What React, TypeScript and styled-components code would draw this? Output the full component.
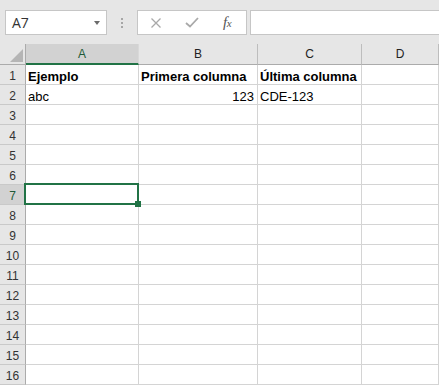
import React from 'react';
import styled, { createGlobalStyle } from 'styled-components';

const GREEN = '#217346';

const Global = createGlobalStyle`
  html, body { margin: 0; padding: 0; background: #fff; overflow: hidden; }
  #root { width: 439px; height: 385px; }
`;

const Page = styled.div`
  width: 439px;
  height: 385px;
  display: flex;
  flex-direction: column;
  overflow: hidden;
  font-family: "Liberation Sans", Arial, sans-serif;
`;

const Toolbar = styled.div`
  flex: none;
  height: 44px;
  box-sizing: border-box;
  background: #e6e6e6;
  display: flex;
  align-items: flex-start;
  padding: 10px 0 0 5px;
`;

const NameBox = styled.div`
  width: 102px;
  height: 25px;
  box-sizing: border-box;
  background: #fff;
  border: 1px solid #c6c6c6;
  display: flex;
  align-items: center;
  justify-content: space-between;
  padding: 0 6px 0 6px;
  font-family: "Open Sans", "Liberation Sans", sans-serif;
  font-size: 14px;
  color: #333;
`;

const DropArrow = styled.span`
  width: 0;
  height: 0;
  border-left: 3.5px solid transparent;
  border-right: 3.5px solid transparent;
  border-top: 4px solid #6b6b6b;
  margin-top: 1px;
`;

const Splitter = styled.div`
  width: 30px;
  height: 25px;
  display: flex;
  flex-direction: column;
  align-items: center;
  justify-content: center;
  gap: 2px;
`;

const Dot = styled.span`
  width: 2px;
  height: 2px;
  background: #a6a6a6;
`;

const FxButtons = styled.div`
  width: 110px;
  height: 25px;
  box-sizing: border-box;
  background: #fff;
  border: 1px solid #c6c6c6;
  display: grid;
  grid-template-columns: 36px 35px 36px;
`;

const IconSlot = styled.div`
  display: flex;
  align-items: center;
  justify-content: center;
`;

const FxText = styled.span`
  font-family: "Liberation Serif", "Times New Roman", serif;
  font-style: italic;
  font-size: 15px;
  color: #555;
  letter-spacing: -0.5px;
  & small { font-size: 11px; }
`;

const FormulaInput = styled.div`
  flex: 1;
  height: 25px;
  box-sizing: border-box;
  margin-left: 3px;
  margin-right: -4px;
  background: #fff;
  border: 1px solid #c6c6c6;
`;

const Sheet = styled.div`
  flex: 1;
  display: grid;
  grid-template-columns: 26px 113px 119px 104px 1fr;
  grid-template-rows: 21px;
  grid-auto-rows: 20px;
`;

const Corner = styled.div`
  box-sizing: border-box;
  background: #e6e6e6;
  border-right: 1px solid #ababab;
  border-bottom: 1px solid #ababab;
  display: flex;
  align-items: flex-end;
  justify-content: flex-end;
  padding: 0 2px 2px 0;
`;

const ColHeader = styled.div<{ $active?: boolean }>`
  box-sizing: border-box;
  background: ${p => (p.$active ? '#d2d2d2' : '#e6e6e6')};
  border-right: 1px solid ${p => (p.$active ? '#d9d9d9' : '#bdbdbd')};
  border-bottom: ${p => (p.$active ? `2px solid ${GREEN}` : '1px solid #ababab')};
  display: flex;
  align-items: center;
  justify-content: center;
  padding-top: ${p => (p.$active ? '1px' : '0')};
  font-size: 12px;
  line-height: 14px;
  color: ${p => (p.$active ? '#1f5a38' : '#222')};
`;

const RowHeader = styled.div<{ $active?: boolean }>`
  box-sizing: border-box;
  background: ${p => (p.$active ? '#d2d2d2' : '#e6e6e6')};
  border-right: 1px solid #ababab;
  border-bottom: 1px solid #c9c9c9;
  display: flex;
  align-items: flex-end;
  justify-content: center;
  font-size: 12px;
  line-height: 15px;
  color: ${p => (p.$active ? '#1f5a38' : '#333')};
`;

const Cell = styled.div<{ $bold?: boolean; $right?: boolean }>`
  position: relative;
  box-sizing: border-box;
  border-right: 1px solid #d4d4d4;
  border-bottom: 1px solid #d4d4d4;
  display: flex;
  align-items: flex-end;
  justify-content: ${p => (p.$right ? 'flex-end' : 'flex-start')};
  padding: 0 3px 0 2px;
  font-size: 13px;
  line-height: 15px;
  font-weight: ${p => (p.$bold ? 700 : 400)};
  color: #000;
  white-space: nowrap;
`;

const Selection = styled.div`
  position: absolute;
  z-index: 5;
  left: -2px;
  top: -2px;
  right: -1px;
  bottom: -1px;
  border: 2px solid ${GREEN};
  pointer-events: none;
`;

const FillHandle = styled.span`
  position: absolute;
  right: -4px;
  bottom: -4px;
  width: 6px;
  height: 6px;
  background: ${GREEN};
`;

const cols = ['A', 'B', 'C', 'D'];

type CellData = { text: string; bold?: boolean; right?: boolean };

const data: Record<number, CellData[]> = {
  1: [
    { text: 'Ejemplo', bold: true },
    { text: 'Primera columna', bold: true },
    { text: 'Última columna', bold: true },
    { text: '' },
  ],
  2: [
    { text: 'abc' },
    { text: '123', right: true },
    { text: 'CDE-123' },
    { text: '' },
  ],
};

const SELECTED_ROW = 7;

export default function App() {
  const rows = Array.from({ length: 16 }, (_, i) => i + 1);
  return (
    <Page>
      <Global />
      <Toolbar>
        <NameBox>
          <span>A7</span>
          <DropArrow />
        </NameBox>
        <Splitter>
          <Dot />
          <Dot />
          <Dot />
        </Splitter>
        <FxButtons>
          <IconSlot>
            <svg width="12" height="12" viewBox="0 0 12 12">
              <path d="M1.5 1.5 L10.5 10.5 M10.5 1.5 L1.5 10.5" stroke="#a9a9a9" strokeWidth="1.3" fill="none" />
            </svg>
          </IconSlot>
          <IconSlot>
            <svg width="14" height="11" viewBox="0 0 14 11">
              <path d="M1 6 L5 9.5 L13 1" stroke="#a9a9a9" strokeWidth="1.8" fill="none" />
            </svg>
          </IconSlot>
          <IconSlot>
            <FxText>
              f<small>x</small>
            </FxText>
          </IconSlot>
        </FxButtons>
        <FormulaInput />
      </Toolbar>
      <Sheet>
        <Corner>
          <svg width="13" height="13" viewBox="0 0 13 13">
            <polygon points="13,0 13,13 0,13" fill="#b5b5b5" />
          </svg>
        </Corner>
        {cols.map(c => (
          <ColHeader key={c} $active={c === 'A'}>
            {c}
          </ColHeader>
        ))}
        {rows.map(r => (
          <React.Fragment key={r}>
            <RowHeader $active={r === SELECTED_ROW}>{r}</RowHeader>
            {cols.map((c, ci) => {
              const d = data[r]?.[ci];
              return (
                <Cell key={c} $bold={d?.bold} $right={d?.right}>
                  {d?.text}
                  {r === SELECTED_ROW && c === 'A' && (
                    <Selection>
                      <FillHandle />
                    </Selection>
                  )}
                </Cell>
              );
            })}
          </React.Fragment>
        ))}
      </Sheet>
    </Page>
  );
}
